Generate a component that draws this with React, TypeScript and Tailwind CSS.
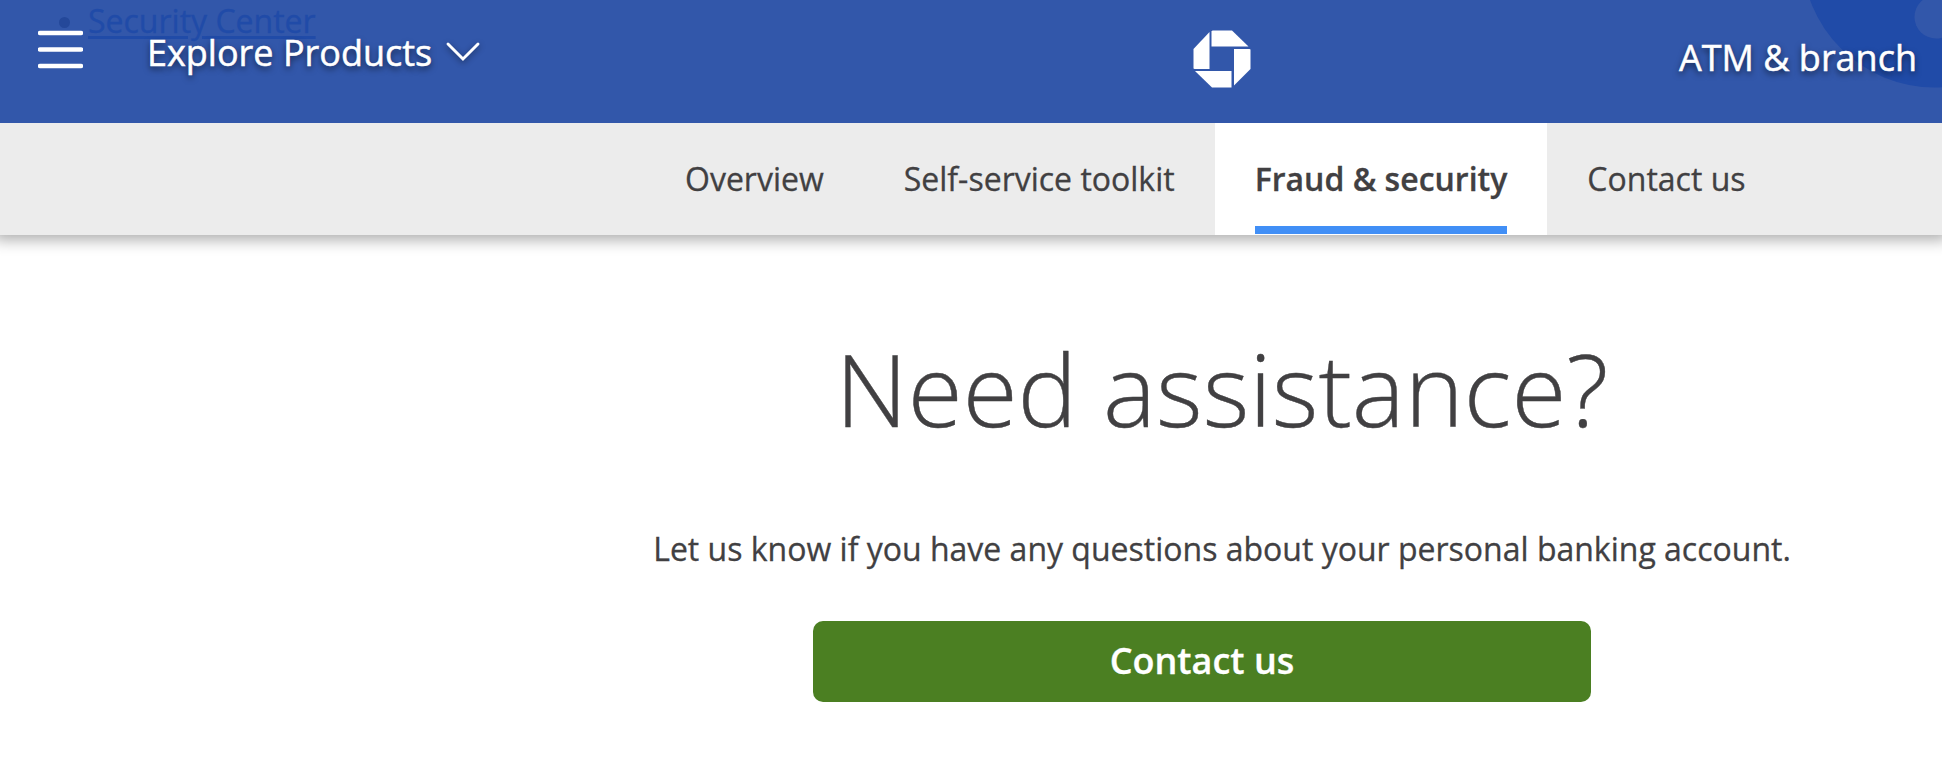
import React from "react";

const tabs = [
  { label: "Overview", active: false },
  { label: "Self-service toolkit", active: false },
  { label: "Fraud & security", active: true },
  { label: "Contact us", active: false },
];

const ChaseLogo = () => {
  return (
    <svg width="58" height="58" viewBox="0 0 58 58" fill="#fff">
      <path d="M19.5 0.5H39L55.5 16.5H18.5V1.5Z" />
      <path d="M57.5 19.5V39L41 55.5V19H56.5Z" />
      <path d="M38.5 57.5H19L2 41H38.5Z" />
      <path d="M0.5 38.5V19L16.5 2V39H1.5Z" />
    </svg>
  );
};

const Header = () => {
  return (
    <header className="relative z-10 h-[123px] overflow-hidden bg-[#3257aa] text-white">
      {/* page content showing faintly through the bar */}
      <div className="absolute inset-0">
        <svg className="absolute right-0 top-0" width="142" height="123" viewBox="0 0 142 123">
          <circle cx="135" cy="-45.5" r="133" fill="#204ba8" />
          <circle cx="136" cy="17" r="21.5" fill="#3257aa" />
        </svg>
        <span className="absolute left-[59px] top-[17px] size-[11px] rounded-full bg-[#24489a]" />
        <a className="absolute left-[88px] top-[-1px] text-[32px] leading-[44px] text-[#204ba8] underline decoration-[3px] underline-offset-[3px] [-webkit-text-stroke:0.3px]">
          Security Center
        </a>
      </div>
      <div className="relative flex justify-between pl-[38px] pr-[25px]">
        <div className="flex w-[1155px]">
          <svg className="mt-[30px]" width="45" height="40" viewBox="0 0 45 40">
            <path d="M2 3H43M2 19.5H43M2 36H43" stroke="#fff" strokeWidth="4.4" strokeLinecap="round" />
          </svg>
          <span className="ml-[64px] mt-7 whitespace-nowrap text-[36px] leading-[50px] [-webkit-text-stroke:0.5px] [text-shadow:0_3px_6px_rgba(0,0,0,0.6)]">
            Explore Products
          </span>
          <svg
            className="ml-[13px] mt-[39px] [filter:drop-shadow(0_2px_3px_rgba(0,0,0,0.45))]"
            width="36"
            height="26"
            viewBox="0 0 36 26"
            fill="none"
          >
            <path d="M3 5L18 20L33 5" stroke="#fff" strokeWidth="2.9" strokeLinecap="round" />
          </svg>
        </div>
        <div className="mt-[30px]">
          <ChaseLogo />
        </div>
        <div className="mt-[33px] grow whitespace-nowrap text-right text-[36px] leading-[50px] [-webkit-text-stroke:0.5px] [text-shadow:0_3px_6px_rgba(0,0,0,0.6)]">
          ATM &amp; branch
        </div>
      </div>
    </header>
  );
};

const TabBar = () => {
  return (
    <nav className="relative flex h-28 bg-[#ececec] pl-[645px] text-[32px] shadow-[0_-1px_14px_6px_rgba(0,0,0,0.32)] [-webkit-text-stroke:0.3px]">
      {tabs.map((tab) => (
        <a key={tab.label} className={tab.active ? "bg-white px-10 font-semibold" : "px-10"}>
          <span
            className={
              tab.active
                ? "block h-[111px] whitespace-nowrap border-b-8 border-[#418ff6] pt-[34px] leading-[44px]"
                : "block whitespace-nowrap pt-[34px] leading-[44px]"
            }
          >
            {tab.label}
          </span>
        </a>
      ))}
    </nav>
  );
};

const App = () => {
  return (
    <div className="h-[778px] overflow-hidden bg-white font-['Open_Sans',sans-serif] text-[#414042]">
      <Header />
      <TabBar />
      <main className="flex flex-col items-center pl-[502px]">
        <h1 className="mt-[83px] whitespace-nowrap text-[100px] font-light leading-[140px] [-webkit-text-stroke:0.4px]">
          Need assistance?
        </h1>
        <p className="mt-[69px] whitespace-nowrap text-[32px] leading-[44px] [-webkit-text-stroke:0.3px]">
          Let us know if you have any questions about your personal banking account.
        </p>
        <button className="mr-10 mt-[50px] h-[81px] w-[778px] rounded-[10px] bg-[#4b7f22] pb-[2px] text-[36px] font-semibold text-white [-webkit-text-stroke:0.3px]">
          Contact us
        </button>
      </main>
    </div>
  );
};

export default App;
